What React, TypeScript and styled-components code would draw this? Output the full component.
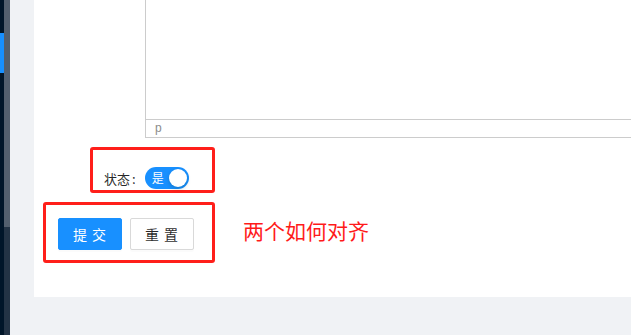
import React from 'react';
import { styled, createGlobalStyle } from 'styled-components';

const GlobalStyle = createGlobalStyle`
  * {
    box-sizing: border-box;
  }
  html,
  body {
    margin: 0;
    padding: 0;
    overflow: hidden;
  }
  body {
    font-family: 'Noto Sans CJK SC', 'Noto Sans', sans-serif;
    font-size: 14px;
    color: rgba(0, 0, 0, 0.85);
  }
`;

export default function App() {
  const [enabled, setEnabled] = React.useState(true);

  return (
    <Page>
      <GlobalStyle />
      <Sidebar>
        <NavRail>
          <ActiveMark />
        </NavRail>
        <ScrollTrack>
          <ScrollThumb />
        </ScrollTrack>
      </Sidebar>
      <Main>
        <Card>
          <Editor>
            <EditorBody />
            <StatusBar>p</StatusBar>
          </Editor>
          <Marked width={125} height={46} $pad="17px 0 1px 11px" $top={9} $left={56}>
            <Label>状态</Label>
            <Switch role="switch" aria-checked={enabled} onClick={() => setEnabled(!enabled)} $on={enabled}>
              <SwitchText>{enabled ? '是' : '否'}</SwitchText>
              <Knob $on={enabled} />
            </Switch>
          </Marked>
          <ActionRow>
            <Marked width={172} height={61} $pad="13px 0 0 12px" $top={0} $left={0} $start>
              <Button $primary>提 交</Button>
              <Button>重 置</Button>
            </Marked>
            <Note>两个如何对齐</Note>
          </ActionRow>
        </Card>
      </Main>
    </Page>
  );
}

const Page = styled.div`
  display: flex;
  width: 631px;
  height: 335px;
  background-color: #f0f2f5;
`;

const Sidebar = styled.div`
  display: flex;
  width: 10px;
  flex-shrink: 0;
`;

const NavRail = styled.div`
  width: 4px;
  background-color: #001529;
  padding-top: 33px;
`;

const ActiveMark = styled.div`
  height: 40px;
  background-color: #1890ff;
`;

const ScrollTrack = styled.div`
  width: 6px;
  background-color: #233345;
`;

const ScrollThumb = styled.div`
  height: 227px;
  background-color: #535f6e;
`;

const Main = styled.div`
  flex: 1;
  min-width: 0;
  padding-left: 24px;
  overflow: hidden;
`;

const Card = styled.div`
  height: 297px;
  background-color: #fff;
  overflow: hidden;
`;

const Editor = styled.div`
  width: 700px;
  margin-left: 111px;
`;

const EditorBody = styled.div`
  height: 119px;
  border-left: 1px solid #ccc;
  border-right: 1px solid #ccc;
`;

const StatusBar = styled.div`
  height: 19px;
  border: 1px solid #ccc;
  padding: 0 9px;
  font-size: 12px;
  line-height: 17px;
  color: #8c8c8c;
  font-family: 'Liberation Sans', Arial, sans-serif;
`;

const Marked = styled.div<{
  width: number;
  height: number;
  $pad: string;
  $top: number;
  $left: number;
  $start?: boolean;
}>`
  display: flex;
  align-items: ${p => (p.$start ? 'flex-start' : 'center')};
  gap: 8px;
  width: ${p => p.width}px;
  height: ${p => p.height}px;
  margin: ${p => p.$top}px 0 0 ${p => p.$left}px;
  padding: ${p => p.$pad};
  border: 3px solid #ff1f1a;
  border-radius: 3px;
  flex-shrink: 0;
`;

const Label = styled.label`
  font-size: 13px;
  color: rgba(0, 0, 0, 0.85);
  white-space: nowrap;
  margin-right: -7px;

  &::after {
    content: ':';
    margin: 0 8px 0 2px;
  }
`;

const Switch = styled.button<{ $on: boolean }>`
  position: relative;
  display: flex;
  align-items: center;
  width: 44px;
  height: 22px;
  padding: 0 0 0 7px;
  border: none;
  border-radius: 11px;
  background-color: ${p => (p.$on ? '#1890ff' : 'rgba(0, 0, 0, 0.25)')};
  cursor: pointer;
`;

const SwitchText = styled.span`
  color: #fff;
  font-size: 12px;
  line-height: 22px;
  font-family: 'Noto Sans CJK SC', sans-serif;
`;

const Knob = styled.span<{ $on: boolean }>`
  position: absolute;
  top: 2px;
  left: ${p => (p.$on ? '24px' : '2px')};
  width: 18px;
  height: 18px;
  border-radius: 50%;
  background-color: #fff;
  box-shadow: 0 2px 4px rgba(0, 35, 11, 0.2);
`;

const ActionRow = styled.div`
  display: flex;
  align-items: center;
  gap: 28px;
  margin: 9px 0 0 9px;
`;

const Button = styled.button<{ $primary?: boolean }>`
  width: 64px;
  height: 32px;
  padding: 0;
  font-family: 'Noto Sans CJK SC', sans-serif;
  font-size: 14px;
  letter-spacing: 1px;
  border-radius: 2px;
  border: 1px solid ${p => (p.$primary ? '#1890ff' : '#d9d9d9')};
  background-color: ${p => (p.$primary ? '#1890ff' : '#fff')};
  color: ${p => (p.$primary ? '#fff' : 'rgba(0, 0, 0, 0.85)')};
  box-shadow: 0 2px 0 rgba(0, 0, 0, 0.015);
  cursor: pointer;
`;

const Note = styled.span`
  font-size: 21px;
  color: #ff1a1a;
  margin-top: -6px;
`;
